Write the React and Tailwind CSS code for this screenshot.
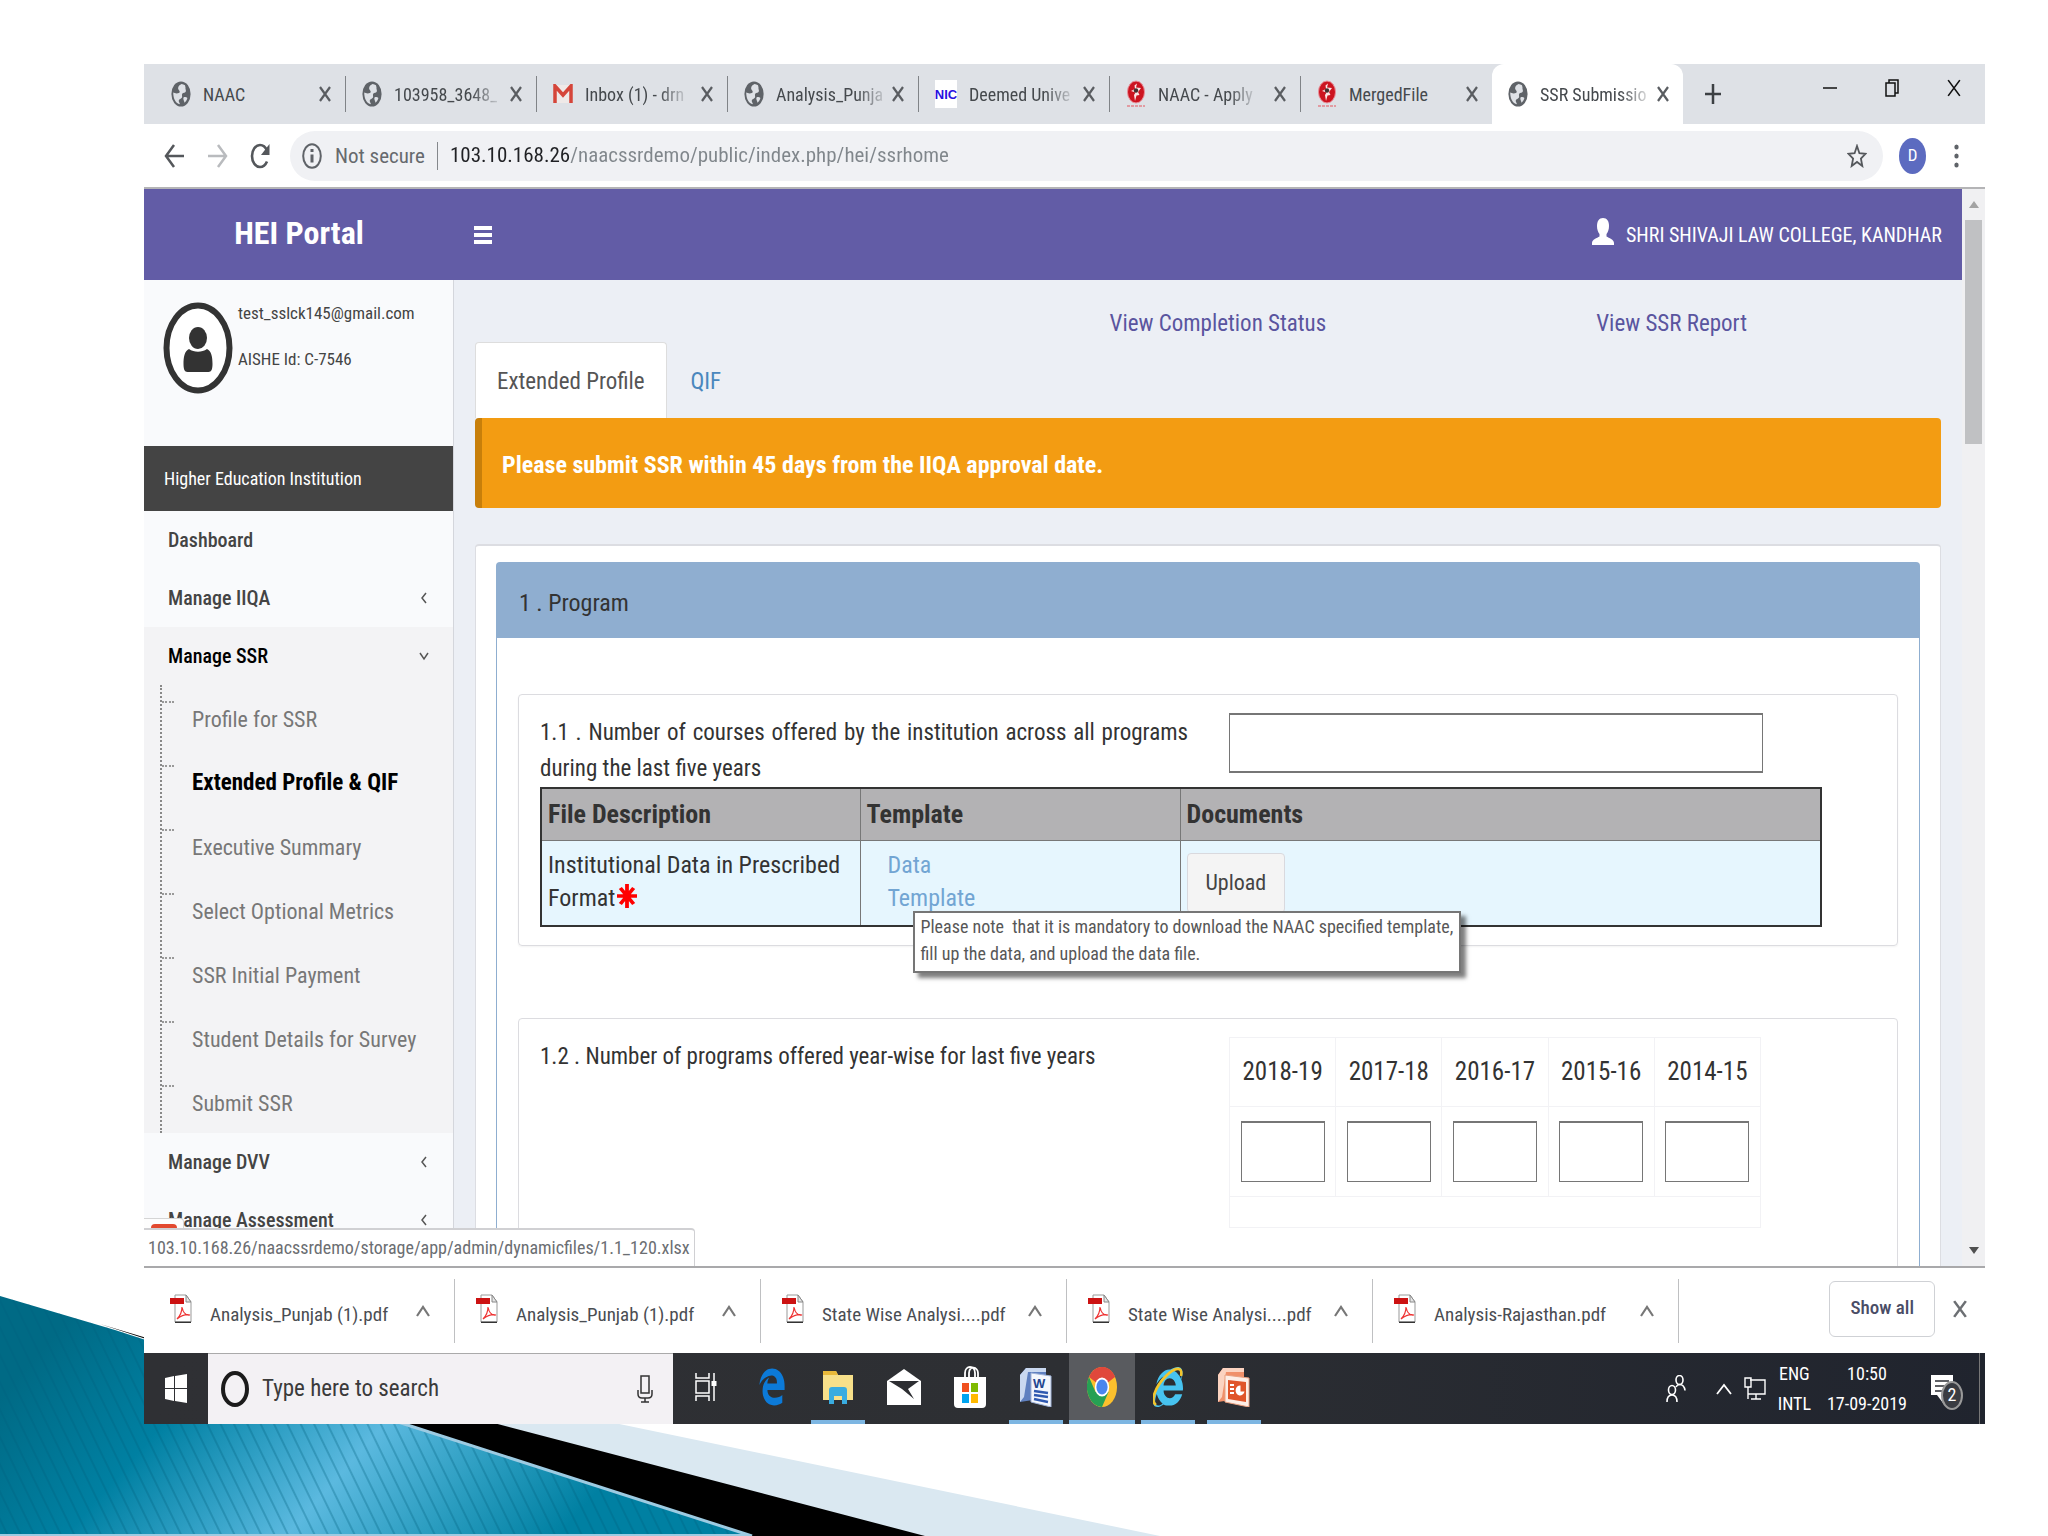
import { FaEdgeLegacy, FaInternetExplorer } from "react-icons/fa6";

const stretch = { preserveAspectRatio: "none", "aria-hidden": true };

function Globe() {
  return (
    <svg {...stretch} viewBox="0 0 20 26" className="h-[26px] w-5 shrink-0">
      <ellipse cx="10" cy="13" rx="9.6" ry="12.6" fill="#5f6368" />
      <path d="M10.500 3c-1.500.8-3.400 2-3.400 4.300 0 1.700 1.400 2 1.600 3.300.3 1.700-1.500 1.800-3 1.800-1.400 0-2.500-.6-3.500-.9C2.200 18 5 22.600 8.800 23.300c.3-1.600-1.400-2.300-1-4.100.3-1.400 2.600-1.300 3.200-2.800.5-1.500-.6-2.600.4-4 .8-1.100 2.600-.4 3.300-1.700.8-1.500-.6-2.500-.2-4.300L14 4.300c-1-.7-2.200-1.200-3.500-1.300z" fill="#dee1e6" />
      <path d="M12.500 16.500c1.500-.8 3-.5 3.900.6-.6 2.300-1.500 3.500-2.900 4.700-.3-2-1.700-3.700-1-5.300z" fill="#dee1e6" />
    </svg>
  );
}

function Gmail() {
  return (
    <svg {...stretch} viewBox="0 0 20 20" className="h-5 w-5 shrink-0">
      <path d="M1 1h18v18H1z" fill="#efe9e8" />
      <path d="M2 19V2l8 9 8-9v17" fill="none" stroke="#d5453a" strokeWidth="3.500" />
    </svg>
  );
}

function Nic() {
  return (
    <span className="flex h-7 w-[22px] shrink-0 items-center justify-center bg-white font-['Liberation_Sans',sans-serif] text-[13px] leading-none font-bold text-[#2a10e0]">
      NIC
    </span>
  );
}

function NaacSeal() {
  return (
    <svg {...stretch} viewBox="0 0 20 28" className="h-7 w-5 shrink-0">
      <ellipse cx="10" cy="12" rx="8.500" ry="11" fill="#cc1420" stroke="#e9909a" />
      <path d="M11 3.500l-1 4 5 .5-3 4 1.500 3-3 .5L9 21l-1-6 1.500-2.500L5 11l4-2-.5-3.500z" fill="#fbe6e6" />
      <circle cx="10" cy="10.500" r="2.200" fill="#43302f" />
      <path d="M1 26h18" stroke="#e2848c" strokeWidth="1.500" strokeDasharray="3 1" />
    </svg>
  );
}

function Cross({ className = "h-4 w-3", width = 2.2, color = "#5a5d61" }) {
  return (
    <svg {...stretch} viewBox="0 0 12 16" className={className}>
      <path d="M1 1l10 14M11 1L1 15" stroke={color} strokeWidth={width} fill="none" />
    </svg>
  );
}

const tabs = [
  { icon: Globe, title: "NAAC" },
  { icon: Globe, title: "103958_3648_", faded: true },
  { icon: Gmail, title: "Inbox (1) - drn", faded: true },
  { icon: Globe, title: "Analysis_Punja", faded: true },
  { icon: Nic, title: "Deemed Unive", faded: true },
  { icon: NaacSeal, title: "NAAC - Apply", faded: true },
  { icon: NaacSeal, title: "MergedFile" },
  { icon: Globe, title: "SSR Submissio", faded: true, active: true },
];

function TabStrip() {
  return (
    <div className="flex h-[60px] shrink-0 bg-[#dee1e6] pl-[11px]">
      {tabs.map((t, i) => {
        const Icon = t.icon;
        return (
          <div
            key={i}
            className={
              "flex w-[191px] shrink-0 items-center pl-4 " +
              (t.active ? "rounded-t-xl bg-white" : i < 6 ? "my-3 border-r border-[#808387]" : "my-3")
            }
          >
            <Icon />
            <span
              className={
                "ml-3 text-[18px] whitespace-nowrap text-[#45494d] " +
                (t.faded ? "[mask-image:linear-gradient(to_right,#000_75%,rgba(0,0,0,0.2))]" : "")
              }
            >
              {t.title}
            </span>
            <button aria-label={"Close " + t.title} className="mr-[14px] ml-auto">
              <Cross />
            </button>
          </div>
        );
      })}
      <button aria-label="New tab" className="ml-[22px]">
        <svg {...stretch} viewBox="0 0 16 22" className="h-[22px] w-4">
          <path d="M8 1v20M0 11h16" stroke="#3c4043" strokeWidth="2.500" />
        </svg>
      </button>
      <div className="ml-auto flex items-center gap-12 pr-6 pb-3">
        <button aria-label="Minimize">
          <svg {...stretch} viewBox="0 0 14 18" className="h-[18px] w-[14px]">
            <path d="M0 9h14" stroke="#111" strokeWidth="1.500" />
          </svg>
        </button>
        <button aria-label="Restore">
          <svg {...stretch} viewBox="0 0 14 18" className="h-[18px] w-[14px]">
            <path d="M1 4h9v13H1zM4 4V1h9v13h-3" stroke="#111" strokeWidth="1.500" fill="none" />
          </svg>
        </button>
        <button aria-label="Close window">
          <Cross className="h-[18px] w-[14px]" width={1.4} color="#111" />
        </button>
      </div>
    </div>
  );
}

function Toolbar() {
  return (
    <div className="flex h-[65px] shrink-0 items-center border-b-2 border-[#b4b4b6] bg-white pl-5">
      <button aria-label="Back">
        <svg {...stretch} viewBox="0 0 20 26" className="h-[26px] w-5">
          <path d="M20 13H2M10 2L2 13l8 11" stroke="#54575b" strokeWidth="2.500" fill="none" />
        </svg>
      </button>
      <button aria-label="Forward" className="ml-6">
        <svg {...stretch} viewBox="0 0 20 26" className="h-[26px] w-5">
          <path d="M0 13h18M10 2l8 11-8 11" stroke="#b9bbbe" strokeWidth="2.500" fill="none" />
        </svg>
      </button>
      <button aria-label="Reload" className="ml-[22px]">
        <svg {...stretch} viewBox="0 0 20 26" className="h-[26px] w-5">
          <path d="M17 18.500C15.500 22 13 24 10 24c-4.500 0-8-5-8-11S5.500 2 10 2c3 0 5.500 2 7 5.500" stroke="#54575b" strokeWidth="2.600" fill="none" />
          <path d="M19.500 1v11H11z" fill="#54575b" />
        </svg>
      </button>
      <div className="ml-5 flex h-[50px] min-w-0 flex-1 items-center rounded-full bg-[#f0f1f4] pr-4 pl-3">
        <svg {...stretch} viewBox="0 0 20 26" className="h-[26px] w-5">
          <ellipse cx="10" cy="13" rx="8.800" ry="11.800" stroke="#5f6368" strokeWidth="2" fill="none" />
          <path d="M10 11.500v8M10 6v3" stroke="#5f6368" strokeWidth="3" />
        </svg>
        <span className="ml-[13px] border-r border-[#85888c] pr-3 text-[21px] leading-7 whitespace-nowrap text-[#66696d]">Not secure</span>
        <input
          aria-label="Address"
          defaultValue="103.10.168.26/naacssrdemo/public/index.php/hei/ssrhome"
          className="ml-3 min-w-0 flex-1 bg-[linear-gradient(to_right,#202124_119px,#80868b_119px)] bg-clip-text text-[21px] text-transparent outline-none"
        />
        <button aria-label="Bookmark">
          <svg {...stretch} viewBox="0 0 20 24" className="h-6 w-5">
            <path d="M10 2l2.400 7.200 6.100.6-4.600 4.700 1.400 7.500L10 18l-5.300 4 1.400-7.500L1.500 9.800l6.100-.6z" stroke="#55585c" strokeWidth="1.800" fill="none" />
          </svg>
        </button>
      </div>
      <button className="ml-4 flex h-9 w-[27px] items-center justify-center rounded-[50%] bg-[#5c6bc0] text-[17px] text-white">D</button>
      <button aria-label="Menu" className="mr-[26px] ml-7">
        <svg {...stretch} viewBox="0 0 6 24" className="h-6 w-[5px]">
          <ellipse cx="3" cy="3" rx="2.600" ry="2.600" fill="#5f6368" />
          <ellipse cx="3" cy="12" rx="2.600" ry="2.600" fill="#5f6368" />
          <ellipse cx="3" cy="21" rx="2.600" ry="2.600" fill="#5f6368" />
        </svg>
      </button>
    </div>
  );
}

const subItems = [
  "Profile for SSR",
  "Extended Profile & QIF",
  "Executive Summary",
  "Select Optional Metrics",
  "SSR Initial Payment",
  "Student Details for Survey",
  "Submit SSR",
];

function NavRow({ label, arrow, open }) {
  return (
    <a
      href="#"
      className={
        "flex h-[58px] items-center justify-between pr-6 pl-6 text-[20px] font-medium " +
        (open ? "text-black" : "text-[#444]")
      }
    >
      {label}
      {arrow && (
        <svg {...stretch} viewBox="0 0 10 12" className="h-3 w-[10px]">
          <path d={open ? "M1 3l4 6 4-6" : "M7 1L3 6l4 5"} stroke="#555" strokeWidth="1.500" fill="none" />
        </svg>
      )}
    </a>
  );
}

function Sidebar() {
  return (
    <aside className="w-[310px] shrink-0 border-r border-[#d4d6dc] bg-[#f9fafc]">
      <div className="flex h-[166px] items-start pt-[22px] pl-[19px]">
        <svg {...stretch} viewBox="0 0 70 92" className="h-[92px] w-[70px] shrink-0">
          <ellipse cx="35" cy="46" rx="31.500" ry="42.500" stroke="#333" strokeWidth="6" fill="#fff" />
          <ellipse cx="35" cy="36" rx="9" ry="11" fill="#333" />
          <path d="M26 47c5 3.500 13 3.500 18 0 4.500 2 5.500 8 5.500 15 0 5-1 8-4 8h-21c-3 0-4-3-4-8 0-7 1-13 5.500-15z" fill="#333" />
        </svg>
        <div className="ml-[5px] text-[17px] leading-[46px] text-[#444]">
          <p className="-mt-3">test_sslck145@gmail.com</p>
          <p>AISHE Id: C-7546</p>
        </div>
      </div>
      <div className="flex h-[65px] items-center bg-[#444] pl-5 text-[18px] text-white">Higher Education Institution</div>
      <nav>
        <NavRow label="Dashboard" />
        <NavRow label="Manage IIQA" arrow />
        <div className="bg-[#f3f3f5]">
          <NavRow label="Manage SSR" arrow open />
          <ul className="ml-4 border-l-2 border-dotted border-[#888]">
            {subItems.map((s) => (
              <li
                key={s}
                className="relative flex h-16 items-center pt-1 before:absolute before:top-4 before:left-0 before:w-3 before:border-t-2 before:border-dotted before:border-[#999]"
              >
                <a
                  href="#"
                  className={
                    "pl-[30px] " +
                    (s === "Extended Profile & QIF" ? "text-[23px] font-bold text-black" : "text-[22px] text-[#777]")
                  }
                >
                  {s}
                </a>
              </li>
            ))}
          </ul>
        </div>
        <NavRow label="Manage DVV" arrow />
        <NavRow label="Manage Assessment" arrow />
      </nav>
    </aside>
  );
}

const years = ["2018-19", "2017-18", "2016-17", "2015-16", "2014-15"];

function Content() {
  return (
    <main className="min-w-0 flex-1 px-[21px] pt-[26px] text-[#333]">
      <div className="flex justify-end gap-[270px] pr-[194px] text-[23px] leading-9 text-[#5a559f]">
        <a href="#">View Completion Status</a>
        <a href="#">View SSR Report</a>
      </div>
      <div role="tablist" className="flex h-[76px] text-[23px]">
        <button role="tab" aria-selected="true" className="rounded-t border border-b-0 border-[#ddd] bg-white px-[21px] pt-1 text-[#555]">Extended Profile</button>
        <button role="tab" aria-selected="false" className="px-6 pt-1 text-[#4a87bd]">QIF</button>
      </div>
      <div className="flex h-[90px] items-center rounded border-l-[7px] border-[#c87f0a] bg-[#f39c12] pt-1 pl-5 text-[24px] font-bold text-white">
        Please submit SSR within 45 days from the IIQA approval date.
      </div>
      <section className="mt-9 rounded-t border border-t-2 border-b-0 border-[#dcdde2] bg-white px-5 pt-4">
        <div className="rounded-t border border-b-0 border-[#8faed0] px-[21px]">
          <h2 className="-mx-[21px] flex h-[75px] items-center bg-[#8faed0] pt-1 pl-[22px] text-[24px]">1 . Program</h2>
          <div className="mt-[56px] rounded border border-[#dcdce0] px-[21px] pt-[18px] pb-[18px] shadow-xs">
            <div className="flex items-start gap-[41px]">
              <label htmlFor="courses" className="w-[648px] pt-[2px] text-justify text-[23px] leading-9">
                1.1 . Number of courses offered by the institution across all programs during the last five years
              </label>
              <input id="courses" className="h-[60px] w-[534px] border border-y-2 border-[#767676] bg-white px-3 text-[23px]" />
            </div>
            <table className="w-[1282px] table-fixed border-collapse border-2 border-[#333] text-left text-[24px] leading-[33px]">
              <colgroup>
                <col className="w-[319px]" />
                <col className="w-[320px]" />
                <col />
              </colgroup>
              <thead className="bg-[#b3b2b4]">
                <tr className="h-[52px] text-[26px]">
                  <th className="border border-[#777] px-[6px]">File Description</th>
                  <th className="border border-[#777] px-[6px]">Template</th>
                  <th className="border border-[#777] px-[6px]">Documents</th>
                </tr>
              </thead>
              <tbody className="bg-[#e6f6fe]">
                <tr className="h-[86px] align-top">
                  <td className="border border-[#777] px-[6px] pt-2">
                    Institutional Data in Prescribed
                    <br />
                    Format
                    <svg {...stretch} viewBox="0 0 18 24" className="ml-[2px] inline h-6 w-5 align-[-2px]">
                      <path d="M9 0v24M0 12h18M3 4l12 16M15 4L3 20" stroke="#f00" strokeWidth="3.400" />
                    </svg>
                  </td>
                  <td className="relative border border-[#777] pt-2 pl-[27px]">
                    <a href="#" className="block w-24 text-[#72a5d3]">Data Template</a>
                    <div
                      role="tooltip"
                      className="absolute top-[70px] left-[52px] z-10 border-2 border-[#767676] bg-white px-[6px] pb-1 text-[18px] leading-[27px] whitespace-nowrap text-[#575757] shadow-[5px_5px_4px_rgba(0,0,0,0.5)]"
                    >
                      Please note &nbsp;that it is mandatory to download the NAAC specified template,
                      <br />
                      fill up the data, and upload the data file.
                    </div>
                  </td>
                  <td className="border border-[#777] px-[6px] pt-3">
                    <button className="h-[60px] rounded border border-[#d9d9de] bg-[#f4f4f4] px-[18px] text-[22px] text-[#444]">Upload</button>
                  </td>
                </tr>
              </tbody>
            </table>
          </div>
          <div className="mt-[72px] flex h-[400px] items-start gap-[41px] rounded border border-[#dcdce0] px-[21px] pt-[18px]">
            <p className="w-[648px] pt-[2px] text-[23px] leading-9">1.2 . Number of programs offered year-wise for last five years</p>
            <table className="w-[532px] table-fixed border-collapse text-center text-[25px]">
              <thead>
                <tr className="h-[69px]">
                  {years.map((y) => (
                    <th key={y} id={"y" + y} className="border border-[#f2f2f5] font-normal">{y}</th>
                  ))}
                </tr>
              </thead>
              <tbody>
                <tr className="h-[90px]">
                  {years.map((y) => (
                    <td key={y} className="border border-[#f2f2f5]">
                      <input aria-labelledby={"y" + y} className="mx-auto block h-[61px] w-[84px] border border-t-2 border-[#767676] bg-white px-2" />
                    </td>
                  ))}
                </tr>
                <tr className="h-[31px]">
                  <td colSpan={5} className="border border-[#f2f2f5]" />
                </tr>
              </tbody>
            </table>
          </div>
        </div>
      </section>
    </main>
  );
}

function Portal() {
  return (
    <div className="relative flex min-h-0 flex-1 overflow-hidden border-b-2 border-[#a9a9ab] bg-[#eceff5]">
      <div className="flex min-w-0 flex-1 flex-col">
        <header className="flex h-[91px] shrink-0 items-center bg-[#625ca6] pr-5 text-white">
          <div className="w-[310px] pb-1 text-center text-[32px] font-bold">HEI Portal</div>
          <button aria-label="Toggle menu" className="ml-5">
            <svg {...stretch} viewBox="0 0 18 20" className="h-5 w-[18px]">
              <path d="M0 3h18M0 10h18M0 17h18" stroke="#fff" strokeWidth="4" />
            </svg>
          </button>
          <button className="ml-auto flex items-center gap-3 text-[20px]">
            <svg {...stretch} viewBox="0 0 22 27" className="mb-[6px] h-[27px] w-[22px]">
              <path d="M11 0c4 0 6 3 6 8 0 3.500-1 6-2.500 8v2.500C17 20 22 21.500 22 25v2H0v-2c0-3.500 5-5 7.500-6.500V16C6 14 5 11.500 5 8c0-5 2-8 6-8z" fill="#fff" />
            </svg>
            SHRI SHIVAJI LAW COLLEGE, KANDHAR
          </button>
        </header>
        <div className="flex">
          <Sidebar />
          <Content />
        </div>
      </div>
      <div className="flex w-[23px] shrink-0 flex-col items-center bg-[#f0f0f2]">
        <svg {...stretch} viewBox="0 0 10 7" className="mt-3 h-[7px] w-[10px] shrink-0">
          <path d="M5 0l5 7H0z" fill="#a3a3a3" />
        </svg>
        <div className="mt-3 h-56 w-[17px] shrink-0 bg-[#c0c1c3]" />
        <svg {...stretch} viewBox="0 0 10 7" className="mt-auto mb-3 h-[7px] w-[10px] shrink-0">
          <path d="M0 0h10L5 7z" fill="#505050" />
        </svg>
      </div>
      <div className="absolute bottom-0 left-0">
        <div className="flex h-[10px] w-10 items-end rounded-tr border-t border-r border-[#d5d5d5] bg-[#fdfdfd] pl-[7px]">
          <div className="h-1 w-[26px] rounded-t bg-[#e2492f]" />
        </div>
        <div className="h-[38px] rounded-tr border-t-2 border-r border-[#d0d0d3] bg-white px-1 text-[18px] leading-9 text-[#6b6e72]">
          103.10.168.26/naacssrdemo/storage/app/admin/dynamicfiles/1.1_120.xlsx
        </div>
      </div>
    </div>
  );
}

const downloads = [
  "Analysis_Punjab (1).pdf",
  "Analysis_Punjab (1).pdf",
  "State Wise Analysi....pdf",
  "State Wise Analysi....pdf",
  "Analysis-Rajasthan.pdf",
];

function Downloads() {
  return (
    <div className="flex h-[85px] shrink-0 items-center bg-white">
      {downloads.map((d, i) => (
        <div
          key={i}
          className={"flex h-16 shrink-0 items-center border-r border-[#bfc0c2] pr-6 " + (i ? "w-[306px] pl-[21px]" : "w-[311px] pl-[26px]")}
        >
          <svg {...stretch} viewBox="0 0 22 29" className="mb-1 h-[29px] w-[22px] shrink-0">
            <path d="M5 1h11l5 7v20H5z" fill="#fff" stroke="#999" />
            <path d="M16 1l5 7h-5z" fill="#e5e5e5" stroke="#888" />
            <path d="M5 28.300h16" stroke="#333" strokeWidth="1.400" />
            <path d="M7 25c3-3 5-8 5-12 1 5 3 9 8 8-4-1-9 1-13 4z" fill="none" stroke="#e33" strokeWidth="1.200" />
            <path d="M0 4h14v6H0z" fill="#cc1212" />
          </svg>
          <button className="mt-[10px] ml-[18px] text-[19px] whitespace-nowrap text-[#4a4d52]">{d}</button>
          <button aria-label={"Options for " + d} className="ml-auto">
            <svg {...stretch} viewBox="0 0 14 12" className="h-3 w-[14px]">
              <path d="M1 11l6-9 6 9" stroke="#777" strokeWidth="2.200" fill="none" />
            </svg>
          </button>
        </div>
      ))}
      <button className="mr-[18px] mb-1 ml-auto h-14 rounded-md border border-[#cfd1d5] px-5 text-[19px] font-medium text-[#4a4d66]">Show all</button>
      <button aria-label="Close downloads" className="mr-[18px] mb-1">
        <Cross className="h-[18px] w-[14px]" color="#6c6f73" />
      </button>
    </div>
  );
}

function TaskView() {
  return (
    <svg {...stretch} viewBox="0 0 22 28" className="h-7 w-[22px]">
      <path d="M1 0v5h13V0M1 28v-5h13v5M1 8h13v12H1zM19 0v28" stroke="#fff" strokeWidth="1.500" fill="none" />
      <path d="M16.500 8h5v5h-5z" fill="#fff" />
    </svg>
  );
}

function Folder() {
  return (
    <svg {...stretch} viewBox="0 0 30 34" className="h-[34px] w-[30px]">
      <path d="M0 1h13l2 4h15v25H0z" fill="#f7e08a" />
      <path d="M0 1h13l2 4H0z" fill="#e9b93a" />
      <path d="M6 34V20q0-3 3-3h12q3 0 3 3v14h-5v-8h-8v8z" fill="#39ace0" />
    </svg>
  );
}

function Mail() {
  return (
    <svg {...stretch} viewBox="0 0 34 36" className="h-9 w-[34px]">
      <path d="M0 12L17 0l17 12v24H0z" fill="#fff" />
      <path d="M2 12h30L21 20l6 10-12-10z" fill="#2d2e32" />
    </svg>
  );
}

function Store() {
  return (
    <svg {...stretch} viewBox="0 0 32 42" className="h-[42px] w-8">
      <path d="M11 12V7c0-8 10-8 10 0v5M15 12V7c0-8 9-6 9 0v5" stroke="#fff" strokeWidth="1.800" fill="none" />
      <path d="M0 11h32v27q0 4-4 4H4q-4 0-4-4z" fill="#fff" />
      <path d="M8 17h7v9H8z" fill="#f0501f" />
      <path d="M17 17h7v9h-7z" fill="#7fba00" />
      <path d="M8 28h7v9H8z" fill="#00a4ef" />
      <path d="M17 28h7v9h-7z" fill="#ffb900" />
    </svg>
  );
}

function Word() {
  return (
    <svg {...stretch} viewBox="0 0 32 40" className="h-10 w-8">
      <path d="M6 1h20v30L0 35V8z" fill="#5f80c0" />
      <path d="M6 1h20v4H8L4 30l-4 5V8z" fill="#c9d8f0" />
      <path d="M11 6l20 3v31L11 35z" fill="#f4f7fd" stroke="#9fb2d8" />
      <text x="13" y="21" fontSize="13" fontWeight="bold" fill="#23458f" fontFamily="Liberation Sans">W</text>
      <path d="M14 24l14 2M14 28l14 2M14 32l14 3" stroke="#2f59b0" strokeWidth="2.500" />
    </svg>
  );
}

function Chrome() {
  return (
    <svg {...stretch} viewBox="0 0 48 48" className="h-10 w-[30px]">
      <circle cx="24" cy="24" r="24" fill="#fbc02d" />
      <path d="M24 24L3.200 12A24 24 0 0 1 44.800 12z" fill="#e0483b" />
      <path d="M24 0a24 24 0 0 1 20.800 12H24z" fill="#e0483b" />
      <path d="M3.200 12A24 24 0 0 0 24 48l10.400-18L24 24 13.600 30z" fill="#26a054" />
      <circle cx="24" cy="24" r="11.500" fill="#fff" />
      <circle cx="24" cy="24" r="9" fill="#4a86ee" />
    </svg>
  );
}

function Explorer() {
  return (
    <span className="relative flex">
      <FaInternetExplorer {...stretch} className="h-10 w-[30px] text-[#47c3f0]" />
      <svg {...stretch} viewBox="0 0 30 40" className="absolute inset-0 h-10 w-[30px]">
        <path d="M3 38C-3 34 2 20 13 9 22 0 30-1 28 9" stroke="#f3c52c" strokeWidth="2.600" fill="none" />
      </svg>
    </span>
  );
}

function PowerPoint() {
  return (
    <svg {...stretch} viewBox="0 0 32 40" className="h-10 w-8">
      <path d="M5 1h21v30L0 35V8z" fill="#f0906a" />
      <path d="M5 1h21v4H8L4 30l-4 5V8z" fill="#fbd3c0" />
      <path d="M7 8l24 3v29L7 35z" fill="#fdeee6" stroke="#e9a080" />
      <path d="M10 13l18 2v20l-18-3z" fill="#e0552a" />
      <path d="M12 18h4M12 22h4M12 26h4" stroke="#fff" strokeWidth="2" />
      <path d="M22.500 18.500a4.500 5 0 1 0 4 6h-4z" fill="#fff" />
    </svg>
  );
}

function Edge() {
  return <FaEdgeLegacy {...stretch} className="h-[38px] w-7 text-[#0c7ad8]" />;
}

const apps = [
  { name: "Task View", icon: TaskView },
  { name: "Edge", icon: Edge },
  { name: "File Explorer", icon: Folder, open: true },
  { name: "Mail", icon: Mail },
  { name: "Store", icon: Store },
  { name: "Word", icon: Word, open: true },
  { name: "Chrome", icon: Chrome, open: true, active: true },
  { name: "Internet Explorer", icon: Explorer, open: true },
  { name: "PowerPoint", icon: PowerPoint, open: true },
];

function Taskbar() {
  return (
    <div className="flex h-[71px] shrink-0 bg-linear-to-r from-[#2f3034] via-[#2d2f33] to-[#20242e] text-white">
      <button aria-label="Start" className="flex w-16 shrink-0 items-center justify-center">
        <svg {...stretch} viewBox="0 0 22 29" className="h-[29px] w-[22px]">
          <path d="M0 4l9-2v12H0zM10 2l12-2v14H10zM0 15h9v12l-9-2zM10 15h12v14l-12-2z" fill="#fff" />
        </svg>
      </button>
      <div className="flex w-[465px] shrink-0 items-center border-t border-[#aaa] bg-[#f3f1f4] pr-5 pl-3">
        <svg {...stretch} viewBox="0 0 30 38" className="h-[38px] w-[30px]">
          <ellipse cx="15" cy="19" rx="12" ry="16" stroke="#1b1b1b" strokeWidth="4" fill="none" />
        </svg>
        <input aria-label="Search" placeholder="Type here to search" className="ml-3 min-w-0 flex-1 text-[23px] text-black outline-none placeholder:text-[#3b3b3b]" />
        <svg {...stretch} viewBox="0 0 16 28" className="h-7 w-4">
          <path d="M4 1h8v17H4zM1 15v4q0 4 4 4h6q4 0 4-4v-4M8 23v4M4 27h8" stroke="#333" strokeWidth="1.500" fill="none" />
        </svg>
      </div>
      {apps.map((a) => {
        const Icon = a.icon;
        return (
          <button
            key={a.name}
            aria-label={a.name}
            className={"flex w-[66px] shrink-0 flex-col items-center justify-end " + (a.active ? "bg-[#595b5f]" : "")}
          >
            <span className="flex flex-1 items-center">
              <Icon />
            </span>
            <span className={"h-1 " + (a.active ? "w-full bg-[#7db6e2]" : a.open ? "w-[54px] bg-[#7db6e2]" : "")} />
          </button>
        );
      })}
      <div className="ml-auto flex items-center text-center text-[18px] leading-[30px]">
        <svg {...stretch} viewBox="0 0 20 28" className="h-7 w-5">
          <ellipse cx="13.500" cy="5" rx="3.500" ry="4.500" stroke="#fff" strokeWidth="1.600" fill="none" />
          <ellipse cx="6" cy="15" rx="3.500" ry="4.500" stroke="#fff" strokeWidth="1.600" fill="none" />
          <path d="M1 27c0-5 2-7 5-7s5 2 5 7M10 12c1-2 2-2.500 3.500-2.500 3 0 5 2 5.500 6" stroke="#fff" strokeWidth="1.600" fill="none" />
        </svg>
        <svg {...stretch} viewBox="0 0 16 12" className="ml-[30px] h-3 w-4">
          <path d="M1 11l7-9 7 9" stroke="#fff" strokeWidth="1.800" fill="none" />
        </svg>
        <svg {...stretch} viewBox="0 0 22 26" className="ml-3 h-[26px] w-[22px]">
          <path d="M6 4h15v14H4V12M12 18v5M7 23h10M1 2h6v9H1zM4 11v12" stroke="#fff" strokeWidth="1.400" fill="none" />
        </svg>
        <p className="ml-3 text-[18px]">
          ENG
          <br />
          INTL
        </p>
        <p className="ml-4">
          10:50
          <br />
          17-09-2019
        </p>
        <button aria-label="Notifications, 2 new" className="relative ml-6 h-[42px] w-8">
          <svg {...stretch} viewBox="0 0 22 28" className="h-7 w-[22px]">
            <path d="M0 0h22v20H12v8l-6-8H0z" fill="#fff" />
            <path d="M4 6h14M4 11h14M4 16h8" stroke="#2a2c33" strokeWidth="1.500" />
          </svg>
          <span className="absolute right-0 bottom-0 flex h-[29px] w-[22px] items-center justify-center rounded-[50%] border-2 border-[#999] bg-[#3a3c42] text-[18px] leading-none">2</span>
        </button>
        <div className="ml-4 h-[71px] w-[6px] border-l border-[#777]" />
      </div>
    </div>
  );
}

function Swoosh() {
  return (
    <svg viewBox="0 1290 1170 246" className="absolute bottom-0 left-0 h-[246px] w-[1170px]" aria-hidden="true">
      <defs>
        <linearGradient id="teal" gradientUnits="userSpaceOnUse" x1="0" y1="1300" x2="480" y2="1722">
          <stop offset="0.100" stopColor="#006a85" />
          <stop offset="0.320" stopColor="#0080a2" />
          <stop offset="0.460" stopColor="#2f9fc4" />
          <stop offset="0.580" stopColor="#5bb9df" />
          <stop offset="0.740" stopColor="#2b9dc0" />
          <stop offset="0.900" stopColor="#0080a2" />
        </linearGradient>
        <pattern id="stripes" width="12" height="12" patternUnits="userSpaceOnUse" patternTransform="rotate(-26)">
          <path d="M6 0v12" stroke="#00607c" strokeWidth="1.500" opacity="0.400" />
        </pattern>
      </defs>
      <path d="M480 1420h120L1160 1536H920z" fill="#dae8f1" />
      <path d="M100 1324l60 18 330 80 435 114H750L395 1420z" fill="#000" />
      <path d="M0 1296l115 34 40 13 242 79 353 114H0z" fill="url(#teal)" />
      <path d="M0 1296l115 34 40 13 242 79 353 114H0z" fill="url(#stripes)" />
      <path d="M395 1421l357 115" stroke="#9dcbe2" strokeWidth="3" />
      <path d="M0 1535h750" stroke="#9dcbe2" strokeWidth="2" />
    </svg>
  );
}

export default function App() {
  return (
    <div className="relative h-screen overflow-hidden bg-white pt-16 pr-[63px] pb-28 pl-36 font-['Roboto_Condensed','Liberation_Sans',sans-serif]">
      <Swoosh />
      <div className="relative flex h-full flex-col bg-white">
        <TabStrip />
        <Toolbar />
        <Portal />
        <Downloads />
        <Taskbar />
      </div>
    </div>
  );
}
